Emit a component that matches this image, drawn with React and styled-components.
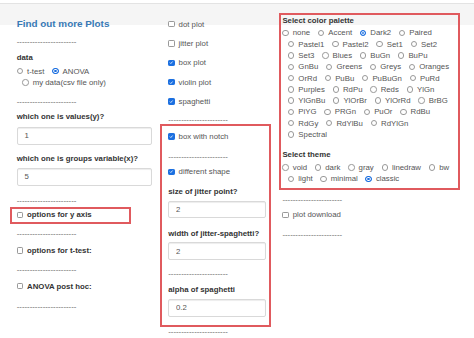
import styled, { createGlobalStyle } from 'styled-components'

const GlobalStyle = createGlobalStyle`
    * { box-sizing: border-box; }
    body {
        margin: 0;
        font-family: "Liberation Sans", Arial, sans-serif;
        font-size: 7.8px;
        color: #333;
        background:
            linear-gradient(#e3e3e3, #e3e3e3) 0 2.7px / 100% 1px no-repeat,
            linear-gradient(#f5f5f5, #f5f5f5) 0 3.7px / 100% 21.3px no-repeat,
            #fff;
    }
`

const Page = styled.div`
    display: grid;
    grid-template-columns: 135px 97.7px 169.5px;
    column-gap: 16.5px;
    padding-left: 16.7px;
    height: 338px;
    overflow: hidden;
`

const Column = styled.div`
    display: flex;
    flex-direction: column;
    align-items: flex-start;
`

const Title = styled.h4`
    margin: 18px 0 0;
    font-size: 9.9px;
    line-height: 12px;
    font-weight: 700;
    color: #3779b5;
`

const Dashes = styled.p`
    margin: ${p => p.$mt}px 0 0;
    line-height: 11px;
    color: #666;
    white-space: nowrap;
`

const Label = styled.div`
    margin-top: ${p => p.$mt || 0}px;
    line-height: 11px;
    font-weight: 700;
    white-space: nowrap;
`

const RadioGroup = styled.div`
    margin-top: ${p => p.$mt}px;
    display: flex;
    flex-wrap: wrap;
    column-gap: 2.2px;
    width: 100%;
    & > label + label { margin-left: 5.6px; }
`

const Option = styled.label`
    display: flex;
    align-items: center;
    gap: 4px;
    height: ${p => p.$lh || 11.3}px;
    margin-top: ${p => p.$mt || 0}px;
    font-weight: ${p => (p.$bold ? 700 : 400)};
    color: ${p => (p.$bold ? '#333' : '#555')};
    white-space: nowrap;
`

const RadioDot = styled.span`
    width: 6.4px;
    height: 6.4px;
    flex: none;
    border-radius: 50%;
    border: 1px solid ${p => (p.$checked ? '#1b6fe0' : '#999')};
    background: ${p => (p.$checked ? '#1b6fe0' : '#fff')};
    box-shadow: ${p => (p.$checked ? 'inset 0 0 0 1.1px #fff' : 'none')};
`

const CheckBox = styled.span`
    width: 6.4px;
    height: 6.4px;
    flex: none;
    display: flex;
    align-items: center;
    justify-content: center;
    border-radius: 1.2px;
    border: 1px solid ${p => (p.$checked ? '#1b6fe0' : '#999')};
    background: ${p => (p.$checked ? '#1b6fe0' : '#fff')};
`

const Field = styled.input`
    margin-top: ${p => p.$mt}px;
    width: 100%;
    height: 17.8px;
    padding: 0 6.8px;
    border: 1px solid #d9d9d9;
    border-radius: 2px;
    box-shadow: inset 0 1px 1px rgba(0,0,0,0.075);
    font: inherit;
    color: #555;
    background: #fff;
    outline: none;
`

// red annotation frames drawn over the screenshot
const Frame = styled.div`
    display: flex;
    flex-direction: column;
    align-items: flex-start;
    border: 2px solid #e05a5e;
    margin: ${p => p.$margin};
    padding: ${p => p.$padding};
    width: ${p => p.$width || 'auto'};
    align-self: ${p => (p.$width ? 'flex-start' : 'stretch')};
`

const DASH = '-----------------------'

const Radio = ({ label, checked }) => (
    <Option>
        <RadioDot $checked={checked} />
        {label}
    </Option>
)

const Check = ({ label, checked, bold, mt }) => (
    <Option $bold={bold} $mt={mt} $lh={11}>
        <CheckBox $checked={checked}>
            {checked && (
                <svg width="5" height="5" viewBox="0 0 10 10">
                    <path d="M2 5.2 L4.2 7.4 L8.2 2.8" fill="none" stroke="#fff" strokeWidth="1.8" />
                </svg>
            )}
        </CheckBox>
        {label}
    </Option>
)

const palettes = [
    'none', 'Accent', 'Dark2', 'Paired', 'Pastel1', 'Pastel2', 'Set1', 'Set2', 'Set3',
    'Blues', 'BuGn', 'BuPu', 'GnBu', 'Greens', 'Greys', 'Oranges', 'OrRd', 'PuBu',
    'PuBuGn', 'PuRd', 'Purples', 'RdPu', 'Reds', 'YlGn', 'YlGnBu', 'YlOrBr', 'YlOrRd',
    'BrBG', 'PiYG', 'PRGn', 'PuOr', 'RdBu', 'RdGy', 'RdYlBu', 'RdYlGn', 'Spectral',
]

const themes = ['void', 'dark', 'gray', 'linedraw', 'bw', 'light', 'minimal', 'classic']

const App = () => {
    return (
        <>
            <GlobalStyle />
            <Page>
                <Column>
                    <Title>Find out more Plots</Title>
                    <Dashes $mt={5.5}>{DASH}</Dashes>
                    <Label $mt={5}>data</Label>
                    <RadioGroup $mt={3}>
                        <Radio label="t-test" />
                        <Radio label="ANOVA" checked />
                        <Radio label="my data(csv file only)" />
                    </RadioGroup>
                    <Dashes $mt={7.55}>{DASH}</Dashes>
                    <Label $mt={4.7}>which one is values(y)?</Label>
                    <Field $mt={4.5} defaultValue="1" readOnly />
                    <Label $mt={8.3}>which one is groups variable(x)?</Label>
                    <Field $mt={4} defaultValue="5" readOnly />
                    <Dashes $mt={8.9}>{DASH}</Dashes>
                    <Frame $margin="1.2px 0 0 -6.7px" $padding="0.6px 0 1.5px 4.7px" $width="121px">
                        <Check label="options for y axis" bold />
                    </Frame>
                    <Dashes $mt={4.5}>{DASH}</Dashes>
                    <Check label="options for t-test:" bold mt={5.7} />
                    <Dashes $mt={8.3}>{DASH}</Dashes>
                    <Check label="ANOVA post hoc:" bold mt={5.3} />
                    <Dashes $mt={9}>{DASH}</Dashes>
                </Column>

                <Column>
                    <Check label="dot plot" mt={18.5} />
                    <Check label="jitter plot" mt={8.4} />
                    <Check label="box plot" checked mt={8.4} />
                    <Check label="violin plot" checked mt={8.4} />
                    <Check label="spaghetti" checked mt={8.4} />
                    <Dashes $mt={7.4}>{DASH}</Dashes>
                    <Frame $margin="-1.5px -4.8px 0 -8.2px" $padding="5.2px 2.8px 8.5px 6.2px">
                        <Check label="box with notch" checked />
                        <Dashes $mt={9}>{DASH}</Dashes>
                        <Check label="different shape" checked mt={4.3} />
                        <Label $mt={8.7}>size of jitter point?</Label>
                        <Field $mt={3.5} defaultValue="2" readOnly />
                        <Label $mt={9.3}>width of jitter-spaghetti?</Label>
                        <Field $mt={3.5} defaultValue="2" readOnly />
                        <Dashes $mt={7.7}>{DASH}</Dashes>
                        <Label $mt={5.7}>alpha of spaghetti</Label>
                        <Field $mt={3.5} defaultValue="0.2" readOnly />
                    </Frame>
                    <Dashes $mt={-1.1}>{DASH}</Dashes>
                </Column>

                <Column>
                    <Frame $margin="12.7px -8px 0 -3.5px" $padding="0 6px 3.4px 1.5px">
                        <Label>Select color palette</Label>
                        <RadioGroup $mt={1.5}>
                            {palettes.map(p => (
                                <Radio key={p} label={p} checked={p === 'Dark2'} />
                            ))}
                        </RadioGroup>
                        <Label $mt={9.3}>Select theme</Label>
                        <RadioGroup $mt={1.5}>
                            {themes.map(t => (
                                <Radio key={t} label={t} checked={t === 'classic'} />
                            ))}
                        </RadioGroup>
                    </Frame>
                    <Dashes $mt={4.5}>{DASH}</Dashes>
                    <Check label="plot download" mt={4} />
                    <Dashes $mt={9}>{DASH}</Dashes>
                </Column>
            </Page>
        </>
    )
}

export default App
